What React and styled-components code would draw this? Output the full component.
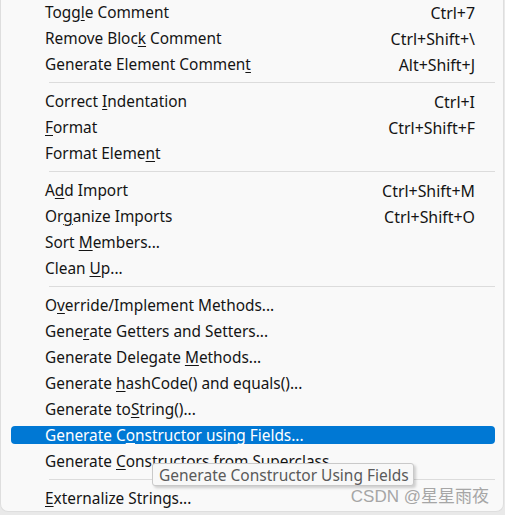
import React from "react";
import styled, { createGlobalStyle } from "styled-components";

const GlobalStyle = createGlobalStyle`
  html, body {
    margin: 0;
    padding: 0;
    background: #e9e9e9;
  }
  body {
    width: 505px;
    height: 515px;
    overflow: hidden;
  }
`;

const Page = styled.div`
  position: relative;
  width: 505px;
  height: 515px;
  overflow: hidden;
  font-family: "Noto Sans", "Open Sans", sans-serif;
`;

const Menu = styled.div`
  box-sizing: border-box;
  width: 504px;
  margin-top: -1px;
  display: flex;
  flex-direction: column;
  padding: 0 8px 0 10px;
  background: #f9f9f9;
  border: 1px solid #dedede;
  border-top: none;
  border-radius: 0 0 8px 8px;
`;

const Item = styled.div`
  box-sizing: border-box;
  display: flex;
  align-items: center;
  justify-content: space-between;
  height: 18px;
  margin: 4px 0;
  padding: 2px 20px 0 34px;
  border-radius: 4px;
  font-size: 15.4px;
  line-height: 16px;
  white-space: nowrap;
  color: ${(p) => (p.$active ? "#ffffff" : "#141414")};
  background: ${(p) => (p.$active ? "#0078d4" : "transparent")};
`;

const Shortcut = styled.span`
  font-size: 15.9px;
`;

const Mnemonic = styled.span`
  text-decoration: underline;
  text-decoration-thickness: 1px;
  text-underline-offset: 2px;
`;

const Separator = styled.div`
  height: 1px;
  margin: 5px 0 5px 38px;
  background: #dcdcdc;
`;

const Tooltip = styled.div`
  position: absolute;
  left: 152px;
  top: 463px;
  box-sizing: border-box;
  width: 262px;
  height: 23px;
  padding: 0 6px;
  display: flex;
  align-items: center;
  background: #f8f8f8;
  border: 1px solid #c9c9c9;
  border-radius: 3px;
  box-shadow: 2px 2px 3px rgba(0, 0, 0, 0.18);
  color: #5a5a5a;
  font-size: 15.5px;
  white-space: nowrap;
`;

const Watermark = styled.div`
  position: absolute;
  right: 16px;
  top: 487px;
  font-family: "Liberation Sans", "Noto Sans CJK SC", sans-serif;
  font-size: 17px;
  line-height: 20px;
  color: #a6a6a6;
  white-space: nowrap;
`;

const groups = [
  [
    ["Togg&le Comment", "Ctrl+7"],
    ["Remove Bloc&k Comment", "Ctrl+Shift+\\"],
    ["Generate Element Commen&t", "Alt+Shift+J"],
  ],
  [
    ["Correct &Indentation", "Ctrl+I"],
    ["&Format", "Ctrl+Shift+F"],
    ["Format Eleme&nt"],
  ],
  [
    ["A&dd Import", "Ctrl+Shift+M"],
    ["Or&ganize Imports", "Ctrl+Shift+O"],
    ["Sort &Members..."],
    ["Clean &Up..."],
  ],
  [
    ["O&verride/Implement Methods..."],
    ["Gene&rate Getters and Setters..."],
    ["Generate Delegate &Methods..."],
    ["Generate &hashCode() and equals()..."],
    ["Generate to&String()..."],
    ["Generate C&onstructor using Fields...", null, true],
    ["Generate &Constructors from Superclass..."],
  ],
  [["&Externalize Strings..."]],
];

function Label({ text }) {
  const i = text.indexOf("&");
  if (i < 0) return <span>{text}</span>;
  return (
    <span>
      {text.slice(0, i)}
      <Mnemonic>{text[i + 1]}</Mnemonic>
      {text.slice(i + 2)}
    </span>
  );
}

export default function App() {
  return (
    <Page>
      <GlobalStyle />
      <Menu>
        {groups.map((g, gi) => (
          <React.Fragment key={gi}>
            {gi > 0 && <Separator />}
            {g.map(([label, sc, active]) => (
              <Item key={label} $active={active}>
                <Label text={label} />
                {sc && <Shortcut>{sc}</Shortcut>}
              </Item>
            ))}
          </React.Fragment>
        ))}
      </Menu>
      <Tooltip>Generate Constructor Using Fields</Tooltip>
      <Watermark>CSDN @星星雨夜</Watermark>
    </Page>
  );
}
